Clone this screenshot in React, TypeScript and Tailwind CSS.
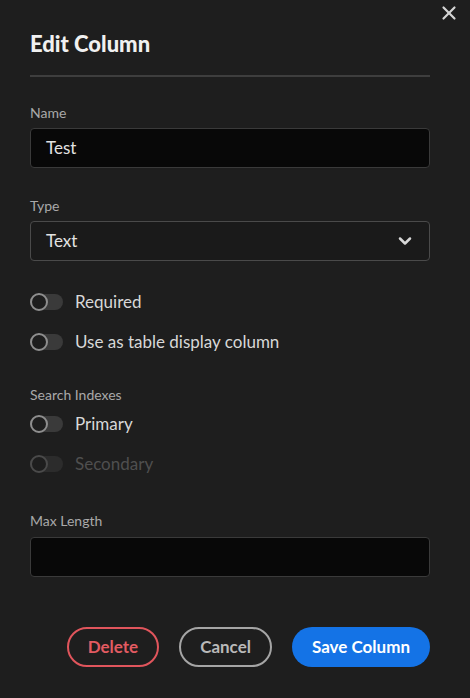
import { X, ChevronDown } from "lucide-react";

function Toggle({ label, disabled = false }: { label: string; disabled?: boolean }) {
    return (
        <div className="flex h-10 items-center gap-3">
            <div className={`relative h-[16px] w-[33px] rounded-full ${disabled ? "bg-[#2c2c2c]" : "bg-[#3a3a3a]"}`}>
                <div
                    className={`absolute -top-px left-0 size-[18px] rounded-full border-2 bg-[#1e1e1e] ${disabled ? "border-[#4a4a4a]" : "border-[#8e8e8e]"}`}
                />
            </div>
            <span className={`text-[17px] ${disabled ? "text-[#4f4f4f]" : "text-[#d8d8d8]"}`}>{label}</span>
        </div>
    );
}

function FieldLabel({ children }: { children: string }) {
    return <p className="h-4 text-[14px] leading-4 text-[#a9a9a9]">{children}</p>;
}

export default function App() {
    return (
        <div className="relative h-[698px] w-[470px] overflow-hidden bg-[#1e1e1e] pl-[30px] pr-[40px] font-['Lato',sans-serif]">
            <button className="absolute right-[10px] top-[2px] text-[#d4d4d4]">
                <X size={22} strokeWidth={2.4} />
            </button>

            <h1 className="mt-[31px] h-[26px] text-[22px] font-black leading-[26px] text-[#f0f0f0]">Edit Column</h1>
            <div className="mt-[18px] h-[2px] w-full bg-[#3e3e3e]" />

            <div className="mt-[28px]">
                <FieldLabel>Name</FieldLabel>
                <div className="mt-[7px] flex h-10 items-center rounded border border-[#3a3a3a] bg-[#080808] px-[15px] text-[17px] text-[#e2e2e2]">
                    Test
                </div>
            </div>

            <div className="mt-[30px]">
                <FieldLabel>Type</FieldLabel>
                <div className="mt-[7px] flex h-10 items-center justify-between rounded border border-[#4a4a4a] bg-[#1a1a1a] pl-[15px] pr-[14px] text-[17px] text-[#e2e2e2]">
                    <span>Text</span>
                    <ChevronDown size={20} strokeWidth={3} className="text-[#d8d8d8]" />
                </div>
            </div>

            <div className="mt-[21px]">
                <Toggle label="Required" />
                <Toggle label="Use as table display column" />
            </div>

            <div className="mt-[25px]">
                <FieldLabel>Search Indexes</FieldLabel>
                <div className="mt-px">
                    <Toggle label="Primary" />
                    <Toggle label="Secondary" disabled />
                </div>
            </div>

            <div className="mt-[29px]">
                <FieldLabel>Max Length</FieldLabel>
                <div className="mt-[8px] h-10 rounded border border-[#3a3a3a] bg-[#080808]" />
            </div>

            <div className="mt-[50px] flex justify-end gap-5">
                <button className="h-10 rounded-full border-2 border-[#e0555c] px-[19px] text-[17px] font-bold text-[#e25b62]">
                    Delete
                </button>
                <button className="h-10 rounded-full border-2 border-[#a5a5a5] px-[19px] text-[17px] font-bold text-[#b9b9b9]">
                    Cancel
                </button>
                <button className="h-10 rounded-full bg-[#1473e6] px-5 text-[17px] font-bold text-white">
                    Save Column
                </button>
            </div>
        </div>
    );
}
